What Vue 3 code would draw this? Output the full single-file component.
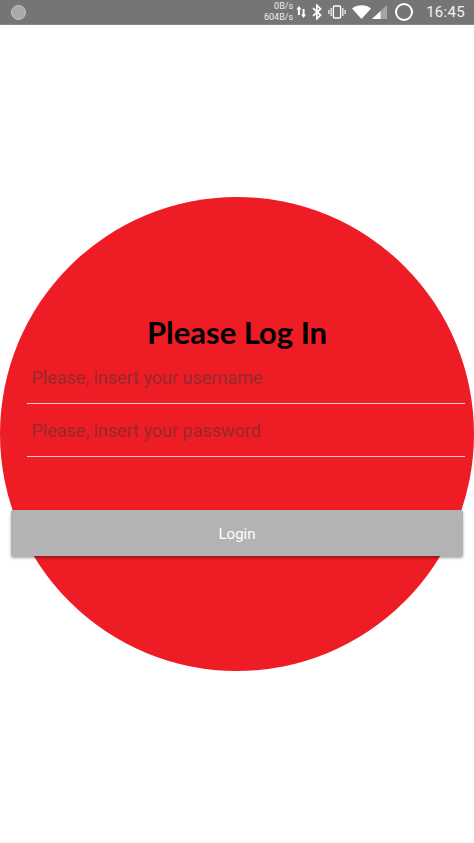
<script setup>
const fields = [
  { id: 'username', type: 'text', placeholder: 'Please, insert your username' },
  { id: 'password', type: 'password', placeholder: 'Please, insert your password' }
]
</script>

<template>
  <div class="page">
    <header class="status">
      <span class="dot"></span>
      <div class="status-right">
        <div class="speed"><span>0B/s</span><span>604B/s</span></div>
        <svg class="ic arrows" viewBox="0 0 12 14" width="10" height="14" preserveAspectRatio="none">
          <path d="M3.5 1 L6.6 4.6 H4.7 V10 H2.3 V4.6 H0.4 Z M7.9 4 H10.3 V9.4 H12 L9.1 13 L6.2 9.4 H7.9 Z" fill="#fff" />
        </svg>
        <svg class="ic bt" viewBox="0 0 10 16" width="10" height="16" preserveAspectRatio="none">
          <path d="M1 4.2 L8.6 11 L4.8 14.8 V1.2 L8.6 5 L1 11.8" fill="none" stroke="#fff" stroke-width="1.7" />
        </svg>
        <svg class="ic vib" viewBox="0 0 20 14" width="18" height="14" preserveAspectRatio="none">
          <rect x="6" y="1" width="8" height="12" rx="1" fill="none" stroke="#fff" stroke-width="1.5" />
          <path d="M3.5 3 V11 M1 5 V9 M16.5 3 V11 M19 5 V9" stroke="#fff" stroke-width="1.3" fill="none" />
        </svg>
        <svg class="ic wifi" viewBox="0 0 18 14" width="19" height="14" preserveAspectRatio="none">
          <path d="M0 3.6 C5 -0.8 13 -0.8 18 3.6 L9 14 Z" fill="#fff" />
        </svg>
        <svg class="ic signal" viewBox="0 0 14 14" width="15" height="14" preserveAspectRatio="none">
          <path d="M14 0 V14 H0 Z" fill="#fff" fill-opacity="0.35" />
          <path d="M8 6 V14 H0 Z" fill="#fff" />
        </svg>
        <span class="ring"></span>
        <span class="time">16:45</span>
      </div>
    </header>

    <main class="circle">
      <h1 class="title">Please Log In</h1>
      <form class="form" @submit.prevent>
        <div v-for="f in fields" :key="f.id" class="field">
          <input :id="f.id" class="input" :type="f.type" :placeholder="f.placeholder" />
        </div>
        <button class="login" type="submit">Login</button>
      </form>
    </main>
  </div>
</template>

<style scoped>
.page {
  width: 474px;
  height: 843px;
  background: #fff;
  overflow: hidden;
  font-family: Roboto, "Liberation Sans", sans-serif;
}
.status {
  height: 25px;
  box-sizing: border-box;
  background: #757575;
  border-bottom: 1px solid #8a8a8a;
  display: flex;
  align-items: center;
  justify-content: space-between;
  padding: 0 9px 0 11px;
  color: #fff;
}
.dot {
  width: 15px;
  height: 15px;
  border-radius: 50%;
  background: #a9a9a9;
  border: 1px solid #c4c4c4;
  box-sizing: border-box;
}
.status-right {
  display: flex;
  align-items: center;
}
.speed {
  display: flex;
  flex-direction: column;
  align-items: flex-end;
  font-size: 9px;
  line-height: 11px;
  color: #eee;
  margin-right: 3px;
}
.ic {
  display: block;
}
.bt {
  margin-left: 6px;
}
.vib {
  margin-left: 6px;
}
.wifi {
  margin-left: 6px;
}
.signal {
  margin-left: 1px;
}
.ring {
  width: 18px;
  height: 18px;
  box-sizing: border-box;
  border: 2.5px solid #fff;
  border-radius: 50%;
  margin-left: 8px;
}
.time {
  font-size: 15px;
  margin-left: 13px;
  color: #f2f2f2;
  letter-spacing: 0.3px;
}
.circle {
  width: 474px;
  height: 474px;
  margin-top: 172px;
  border-radius: 50%;
  background: #ee1c25;
  display: flex;
  flex-direction: column;
  align-items: center;
  padding-top: 116px;
  box-sizing: border-box;
}
.title {
  margin: 0;
  font-family: Lato, "Noto Sans", sans-serif;
  font-size: 31px;
  line-height: 38px;
  font-weight: 700;
  color: #000;
}
.form {
  align-self: stretch;
  display: flex;
  flex-direction: column;
  padding: 0 11px;
}
.field {
  height: 53px;
  margin: 0 -2px 0 16px;
  border-bottom: 1px solid rgba(255, 255, 255, 0.75);
  box-sizing: border-box;
}
.input {
  display: block;
  width: 100%;
  height: 100%;
  box-sizing: border-box;
  border: 0;
  outline: 0;
  background: transparent;
  padding: 0 0 0 4.5px;
  font-family: Roboto, "Liberation Sans", sans-serif;
  font-size: 18px;
  color: #000;
}
.input::placeholder {
  color: #96292e;
  opacity: 1;
}
.login {
  margin-top: 53px;
  height: 46px;
  border: 0;
  border-radius: 2px;
  background: #b3b3b3;
  color: #fff;
  padding: 2px 0 0;
  font-family: Roboto, "Liberation Sans", sans-serif;
  font-size: 15px;
  box-shadow: 0 2px 3px rgba(0, 0, 0, 0.35);
}
</style>
